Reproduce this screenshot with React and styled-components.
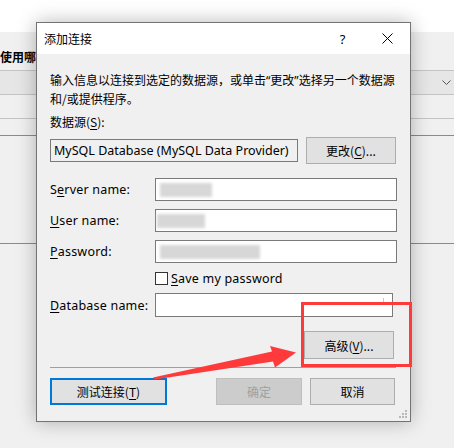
import React from "react";
import styled, { createGlobalStyle } from "styled-components";

const GlobalStyle = createGlobalStyle`
  body {
    margin: 0;
    background: #f0f0f0;
    font-family: "Noto Sans", "Noto Sans CJK SC", sans-serif;
    font-size: 12px;
    color: #000;
  }
`;

const Desktop = styled.div`
  position: relative;
  width: 454px;
  height: 448px;
  overflow: hidden;
  background: #f0f0f0;
`;

const TopStrip = styled.div`
  height: 32px;
  background: #fff;
`;

const Heading = styled.div`
  height: 39px;
  box-sizing: border-box;
  padding-top: 18px;
  font-family: "Noto Sans CJK SC", sans-serif;
  font-weight: bold;
  font-size: 12px;
  line-height: 14px;
  border-bottom: 1px solid #c4c4c4;
`;

const BackRow = styled.div`
  height: ${(p) => p.$h}px;
  background: ${(p) => p.$bg || "transparent"};
  border-bottom: 1px solid ${(p) => p.$line || "#c4c4c4"};
  display: flex;
  align-items: center;
  justify-content: flex-end;
  padding-right: 3px;
`;

const Dialog = styled.div`
  position: absolute;
  left: 36px;
  top: 22px;
  width: 375px;
  height: 400px;
  box-sizing: border-box;
  border: 1px solid #737373;
  background: #f0f0f0;
  box-shadow: 0 0 18px rgba(0, 0, 0, 0.28);
  display: flex;
  flex-direction: column;
`;

const TitleBar = styled.div`
  height: 31px;
  background: #fff;
  display: flex;
  align-items: center;
  padding-left: 7px;
  font-family: "Noto Sans CJK SC", sans-serif;
`;

const Title = styled.div`
  flex: 1;
  font-size: 12px;
`;

const TitleButton = styled.div`
  width: 45px;
  height: 31px;
  display: flex;
  align-items: center;
  justify-content: center;
  font-size: 13px;
  font-family: "Noto Sans", sans-serif;
`;

const Body = styled.div`
  flex: 1;
  padding: 17px 13px 0 13px;
  display: flex;
  flex-direction: column;
`;

const Cjk = styled.div`
  font-family: "Noto Sans CJK SC", sans-serif;
  font-size: 12px;
  line-height: 18px;
  white-space: nowrap;
`;

const Quote = styled.span`
  font-family: "Noto Sans", sans-serif;
`;

const DsLabel = styled(Cjk)`
  margin-top: 5px;
`;

const DsRow = styled.div`
  margin-top: 6px;
  height: 27px;
  display: flex;
  align-items: center;
  gap: 8px;
`;

const ReadOnlyBox = styled.div`
  width: 248px;
  height: 23px;
  box-sizing: border-box;
  border: 1px solid #7a7a7a;
  background: #f0f0f0;
  display: flex;
  align-items: center;
  padding-left: 3px;
  font-size: 12.5px;
  white-space: nowrap;
  overflow: hidden;
`;

const Button = styled.div`
  width: ${(p) => p.$w}px;
  height: ${(p) => p.$h || 27}px;
  box-sizing: border-box;
  border: ${(p) =>
    p.$focus ? "2px solid #0078d7" : p.$disabled ? "1px solid #bfbfbf" : "1px solid #adadad"};
  background: ${(p) => (p.$disabled ? "#cccccc" : "#e1e1e1")};
  color: ${(p) => (p.$disabled ? "#a0a0a0" : "#000")};
  display: flex;
  align-items: center;
  justify-content: center;
  font-family: "Noto Sans CJK SC", sans-serif;
  font-size: 12px;
  flex-shrink: 0;
`;

const Form = styled.div`
  margin-top: 14px;
  display: grid;
  grid-template-columns: 105px 242px;
  row-gap: 8px;
  align-items: center;
`;

const Label = styled.div`
  font-size: 12.5px;
  letter-spacing: 0.2px;
`;

const Input = styled.div`
  height: ${(p) => p.$h || 23}px;
  width: ${(p) => p.$w || 242}px;
  box-sizing: border-box;
  border: 1px solid #7a7a7a;
  background: #fff;
  display: flex;
  align-items: center;
  position: relative;
`;

const Blur = styled.div`
  margin-left: ${(p) => p.$x}px;
  width: ${(p) => p.$w}px;
  height: 14px;
  background: #d7d7d7;
  filter: blur(1.5px);
`;

const DropMark = styled.div`
  position: absolute;
  right: 8px;
  top: 4px;
  width: 1px;
  height: 4px;
  background: #c8c8c8;
`;

const CheckRow = styled.label`
  grid-column: 2;
  display: flex;
  align-items: center;
  gap: 3px;
  height: 14px;
  font-size: 12.5px;
  letter-spacing: 0.2px;
`;

const CheckBox = styled.span`
  width: 13px;
  height: 13px;
  box-sizing: border-box;
  border: 1px solid #333;
  background: #fff;
`;

const AdvancedRow = styled.div`
  margin-top: 14px;
  display: flex;
  justify-content: flex-end;
  padding-right: 3px;
`;

const Separator = styled.div`
  margin-top: 8px;
  height: 1px;
  background: #a0a0a0;
  margin-right: 1px;
`;

const ButtonRow = styled.div`
  margin-top: 10px;
  display: flex;
  align-items: center;
  gap: 8px;
  padding-right: 2px;
`;

const Spacer = styled.div`
  flex: 1;
`;

const Grip = styled.svg`
  position: absolute;
  right: 2px;
  bottom: 2px;
`;

const RedBox = styled.div`
  position: absolute;
  left: 301px;
  top: 302px;
  width: 111px;
  height: 65px;
  box-sizing: border-box;
  border: 3px solid #ff3a3a;
`;

const Overlay = styled.svg`
  position: absolute;
  left: 0;
  top: 0;
  pointer-events: none;
`;

const U = styled.span`
  text-decoration: underline;
  text-underline-offset: 2px;
`;

export default function App() {
  return (
    <Desktop>
      <GlobalStyle />
      <TopStrip />
      <Heading>使用哪个</Heading>
      <BackRow $h={23} $bg="#e6e6e6">
        <svg width="9" height="6" viewBox="0 0 9 6">
          <path d="M0.5 0.5 L4.5 4.5 L8.5 0.5" fill="none" stroke="#555" strokeWidth="1" />
        </svg>
      </BackRow>
      <BackRow $h={23} />
      <BackRow $h={16} $line="#8a8a8a" />
      <BackRow $h={107} $line="#8a8a8a" />

      <Dialog>
        <TitleBar>
          <Title>添加连接</Title>
          <TitleButton>?</TitleButton>
          <TitleButton>
            <svg width="11" height="11" viewBox="0 0 11 11">
              <path d="M0.5 0.5 L10.5 10.5 M10.5 0.5 L0.5 10.5" stroke="#000" strokeWidth="1" />
            </svg>
          </TitleButton>
        </TitleBar>
        <Body>
          <Cjk>
            输入信息以连接到选定的数据源，或单击<Quote>“</Quote>更改<Quote>”</Quote>选择另一个数据源
            <br />
            和/或提供程序。
          </Cjk>
          <DsLabel>
            数据源(<U>S</U>):
          </DsLabel>
          <DsRow>
            <ReadOnlyBox>MySQL Database (MySQL Data Provider)</ReadOnlyBox>
            <Button $w={90}>
              更改(<U>C</U>)...
            </Button>
          </DsRow>
          <Form>
            <Label>
              S<U>e</U>rver name:
            </Label>
            <Input>
              <Blur $x={4} $w={52} />
            </Input>
            <Label>
              <U>U</U>ser name:
            </Label>
            <Input>
              <Blur $x={1} $w={48} />
            </Input>
            <Label>
              <U>P</U>assword:
            </Label>
            <Input>
              <Blur $x={4} $w={100} />
            </Input>
            <CheckRow>
              <CheckBox />
              <span>
                <U>S</U>ave my password
              </span>
            </CheckRow>
            <Label>
              <U>D</U>atabase name:
            </Label>
            <Input $h={24} $w={238}>
              <DropMark />
            </Input>
          </Form>
          <AdvancedRow>
            <Button $w={90} $h={28}>
              高级(<U>V</U>)...
            </Button>
          </AdvancedRow>
          <Separator />
          <ButtonRow>
            <Button $w={117} $focus>
              测试连接(<U>T</U>)
            </Button>
            <Spacer />
            <Button $w={86} $disabled>
              确定
            </Button>
            <Button $w={85}>取消</Button>
          </ButtonRow>
        </Body>
        <Grip width="10" height="10" viewBox="0 0 10 10">
          <g fill="#b8b8b8">
            <rect x="7" y="1" width="2" height="2" />
            <rect x="4" y="4" width="2" height="2" />
            <rect x="7" y="4" width="2" height="2" />
            <rect x="1" y="7" width="2" height="2" />
            <rect x="4" y="7" width="2" height="2" />
            <rect x="7" y="7" width="2" height="2" />
          </g>
        </Grip>
      </Dialog>

      <RedBox />
      <Overlay width="454" height="448" viewBox="0 0 454 448">
        <polygon
          points="153,377.5 272,351.5 270,346 296,352.5 275,367.5 273,361.5 155,379.5"
          fill="#ff3a3a"
        />
      </Overlay>
    </Desktop>
  );
}
